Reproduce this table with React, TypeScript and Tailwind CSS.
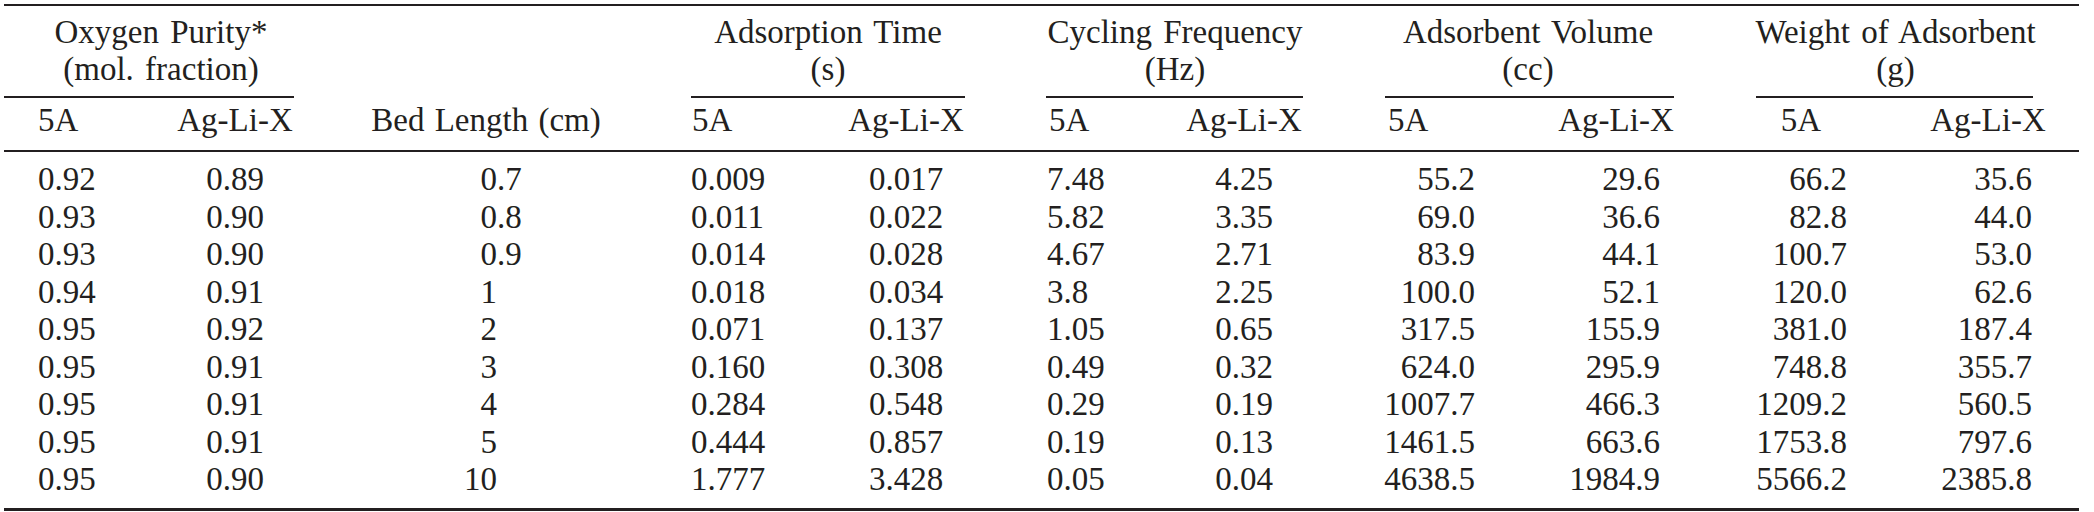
import React from "react";

const rows: string[][] = [
  ["0.92", "0.89", "0.7", "0.009", "0.017", "7.48", "4.25", "55.2", "29.6", "66.2", "35.6"],
  ["0.93", "0.90", "0.8", "0.011", "0.022", "5.82", "3.35", "69.0", "36.6", "82.8", "44.0"],
  ["0.93", "0.90", "0.9", "0.014", "0.028", "4.67", "2.71", "83.9", "44.1", "100.7", "53.0"],
  ["0.94", "0.91", "1", "0.018", "0.034", "3.8", "2.25", "100.0", "52.1", "120.0", "62.6"],
  ["0.95", "0.92", "2", "0.071", "0.137", "1.05", "0.65", "317.5", "155.9", "381.0", "187.4"],
  ["0.95", "0.91", "3", "0.160", "0.308", "0.49", "0.32", "624.0", "295.9", "748.8", "355.7"],
  ["0.95", "0.91", "4", "0.284", "0.548", "0.29", "0.19", "1007.7", "466.3", "1209.2", "560.5"],
  ["0.95", "0.91", "5", "0.444", "0.857", "0.19", "0.13", "1461.5", "663.6", "1753.8", "797.6"],
  ["0.95", "0.90", "10", "1.777", "3.428", "0.05", "0.04", "4638.5", "1984.9", "5566.2", "2385.8"],
];

const cols =
  "grid grid-cols-[126px_210px_292px_168px_212px_138px_188px_182px_192px_178px_189px]";

const bodyCls = [
  "pl-[34px] text-left",
  "text-center",
  "",
  "pl-[59px] text-left",
  "text-center",
  "pl-[35px] text-left",
  "text-center",
  "pr-[45px] text-right",
  "pr-[52px] text-right",
  "pr-[43px] text-right",
  "pr-[47px] text-right",
];

function BedLength({ v }: { v: string }) {
  const i = v.indexOf(".");
  const intPart = i >= 0 ? v.slice(0, i) : v;
  const frac = i >= 0 ? v.slice(i) : "";
  return (
    <div className="flex">
      <span className="w-[157px] text-right">{intPart}</span>
      <span>{frac}</span>
    </div>
  );
}

function Group({
  l1,
  l2,
  textCls,
  lineCls,
}: {
  l1: string;
  l2: string;
  textCls: string;
  lineCls: string;
}) {
  return (
    <div className="col-span-2 flex flex-col">
      <div className={"flex flex-col items-center pb-[8px] leading-[37px] [word-spacing:3px] " + textCls}>
        <span className="whitespace-nowrap">{l1}</span>
        <span className="whitespace-nowrap">{l2}</span>
      </div>
      <div className={"h-[2px] bg-[#231f20] " + lineCls} />
    </div>
  );
}

export default function App() {
  return (
    <div className="min-h-[512px] w-[2094px] bg-white pl-[4px] pt-[4px] font-['Liberation_Serif','Times_New_Roman',serif] text-[33px] text-[#231f20]">
      <div className="w-[2075px] border-t-2 border-[#231f20]">
        {/* header row 1 */}
        <div className={cols + " pt-[8px]"}>
          <Group l1="Oxygen Purity*" l2="(mol. fraction)" textCls="pr-[22px]" lineCls="mr-[46px]" />
          <div />
          <Group l1="Adsorption Time" l2="(s)" textCls="pl-[12px]" lineCls="ml-[59px] mr-[47px]" />
          <Group l1="Cycling Frequency" l2="(Hz)" textCls="" lineCls="ml-[34px] mr-[35px]" />
          <Group l1="Adsorbent Volume" l2="(cc)" textCls="pl-[6px]" lineCls="ml-[47px] mr-[38px]" />
          <Group l1="Weight of Adsorbent" l2="(g)" textCls="" lineCls="ml-[44px] mr-[46px]" />
        </div>
        {/* header row 2 */}
        <div className={cols + " border-b-2 border-[#231f20] pt-[4px] pb-[11px] leading-[37px]"}>
          <div className="pl-[34px] text-left">5A</div>
          <div className="text-center">Ag-Li-X</div>
          <div className="text-center [word-spacing:2px]">Bed Length (cm)</div>
          <div className="pl-[60px] text-left">5A</div>
          <div className="text-center">Ag-Li-X</div>
          <div className="pl-[37px] text-left">5A</div>
          <div className="text-center">Ag-Li-X</div>
          <div className="pl-[50px] text-left">5A</div>
          <div className="text-center">Ag-Li-X</div>
          <div className="text-center">5A</div>
          <div className="pl-[7px] text-center">Ag-Li-X</div>
        </div>
        {/* body */}
        <div className={cols + " border-b-[3px] border-[#231f20] pb-[9px] pt-[9px] leading-[37.5px]"}>
          {rows.map((r, ri) =>
            r.map((v, ci) => (
              <div key={ri + "-" + ci} className={"h-[37.5px] whitespace-nowrap " + bodyCls[ci]}>
                {ci === 2 ? <BedLength v={v} /> : v}
              </div>
            ))
          )}
        </div>
      </div>
    </div>
  );
}
